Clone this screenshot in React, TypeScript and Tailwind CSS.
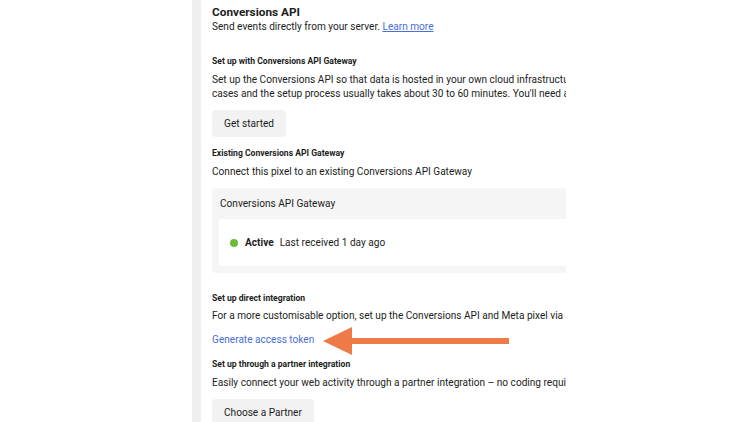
import React from 'react';

const font = { fontFamily: 'Roboto, "Liberation Sans", Arial, sans-serif' };

const App = () => {
    return (
        <div className="relative w-[750px] h-[422px] overflow-hidden bg-white flex text-[#1c1e21]" style={font}>
            <div className="w-[192px] shrink-0" />
            <div className="w-[9px] shrink-0 bg-[#efefef]" />
            <div className="w-[11px] shrink-0" />

            <div className="w-[354px] shrink-0 overflow-hidden">
                <div className="w-[700px] pt-[4px]">
                    <h1 className="text-[11.8px] leading-[16px] font-bold">Conversions API</h1>
                    <p className="text-[10.1px] leading-[14px]">
                        Send events directly from your server.{' '}
                        <a className="text-[#4a6fd8] underline">Learn more</a>
                    </p>

                    <h2 className="mt-[21px] text-[8.6px] leading-[12px] font-bold">Set up with Conversions API Gateway</h2>
                    <p className="mt-[6px] text-[10.1px] leading-[14px] whitespace-nowrap">
                        Set up the Conversions API so that data is hosted in your own cloud infrastructure. This works for most use
                        <br />
                        cases and the setup process usually takes about 30 to 60 minutes. You'll need access to a cloud account.
                    </p>
                    <button className="mt-[9px] h-[27px] px-[12px] rounded-[4px] bg-[#f2f2f2] text-[10.1px] block">
                        Get started
                    </button>

                    <h2 className="mt-[10px] text-[8.6px] leading-[12px] font-bold">Existing Conversions API Gateway</h2>
                    <p className="mt-[6px] text-[10.1px] leading-[14px]">Connect this pixel to an existing Conversions API Gateway</p>

                    <div className="mt-[9px] bg-[#f5f5f5] rounded-[4px] pt-[9px] pb-[7px] px-[7px]">
                        <div className="px-[1px] text-[10.1px] leading-[14px]">Conversions API Gateway</div>
                        <div className="mt-[8px] h-[47px] bg-white rounded-[3px] flex items-center px-[11px] text-[10.1px]">
                            <span className="w-[8px] h-[8px] rounded-full bg-[#6cbc3c]" />
                            <span className="ml-[7px] font-bold">Active</span>
                            <span className="ml-[6px]">Last received 1 day ago</span>
                        </div>
                    </div>

                    <h2 className="mt-[19px] text-[8.6px] leading-[12px] font-bold">Set up direct integration</h2>
                    <p className="mt-[5px] text-[10.1px] leading-[14px] whitespace-nowrap">
                        For a more customisable option, set up the Conversions API and Meta pixel via a manual integration.
                    </p>
                    <a className="mt-[10px] block text-[10.1px] leading-[14px] text-[#4a6fd8]">Generate access token</a>

                    <h2 className="mt-[11px] text-[8.6px] leading-[12px] font-bold">Set up through a partner integration</h2>
                    <p className="mt-[6px] text-[10.1px] leading-[14px] whitespace-nowrap">
                        Easily connect your web activity through a partner integration – no coding required.
                    </p>
                    <button className="mt-[9px] h-[27px] px-[12px] rounded-[4px] bg-[#f2f2f2] text-[10.1px] block">
                        Choose a Partner
                    </button>
                </div>
            </div>

            <svg className="absolute left-0 top-0" width="750" height="422" viewBox="0 0 750 422">
                <polygon points="323,341 352,327 352,355" fill="#ee7a48" />
                <rect x="350" y="338" width="159" height="6" fill="#ee7a48" />
            </svg>
        </div>
    );
};

export default App;
